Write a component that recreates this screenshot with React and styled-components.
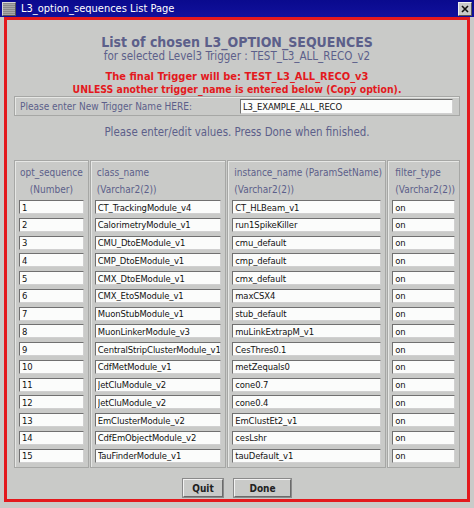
import React from 'react'
import styled, { createGlobalStyle } from 'styled-components'

const Global = createGlobalStyle`
  html, body { margin: 0; padding: 0; background: #c9cac8; }
  body { font-family: "DejaVu Sans Condensed", "DejaVu Sans", sans-serif; }
`

const Win = styled.div`
  width: 474px;
  height: 508px;
  display: flex;
  flex-direction: column;
  background: #c9cac8;
  overflow: hidden;
`
const TitleBar = styled.div`
  height: 17px;
  display: flex;
  align-items: center;
  background: linear-gradient(#0a0a8e, #10109c);
  padding: 0 2px;
  gap: 5px;
`
const MenuBox = styled.div`
  width: 12px;
  height: 12px;
  background: repeating-linear-gradient(#8a8a8a 0 1px, #a8a8a8 1px 2px);
  border: 1px solid #d8d8d8;
  border-right-color: #555;
  border-bottom-color: #555;
`
const TitleText = styled.span`
  flex: 1;
  color: #fff;
  font-family: "DejaVu Sans Condensed", "DejaVu Sans", sans-serif;
  font-size: 11px;
`
const CloseBox = styled.div`
  width: 12px;
  height: 12px;
  background: #c9cac8;
  border: 1px solid #f0f0f0;
  border-right-color: #555;
  border-bottom-color: #555;
  display: flex;
  align-items: center;
  justify-content: center;
`
const Frame = styled.div`
  margin: 0 4px 6px 4px;
  height: 485px;
  border: 3px solid #e3191d;
  box-sizing: border-box;
  display: flex;
  flex-direction: column;
  align-items: center;
  padding: 0 7px;
`
const Heading = styled.div`
  margin-top: 14px;
  font-size: 14px;
  line-height: 16px;
  font-weight: bold;
  color: #5c5f8a;
`
const SubHeading = styled.div`
  font-size: 11.5px;
  line-height: 13px;
  color: #5c5f8a;
`
const Warning = styled.div`
  margin-top: ${p => p.$top || 0}px;
  font-size: ${p => p.$size || 11}px;
  line-height: 13px;
  font-weight: bold;
  color: #e3191d;
`
const TriggerPanel = styled.div`
  align-self: stretch;
  height: 20px;
  box-sizing: border-box;
  border: 1px solid #a6a7a5;
  box-shadow: inset 1px 1px #e6e7e5;
  display: flex;
  align-items: center;
  padding: 0 6px 0 5px;
`
const PanelLabel = styled.span`
  flex: 1;
  font-size: 10px;
  color: #5c5f8a;
`
const Field = styled.input`
  box-sizing: border-box;
  width: ${p => p.$w || '100%'};
  height: ${p => p.$h || 14}px;
  margin: 0;
  padding: 0 0 0 2px;
  border: 1px solid #707070;
  border-right-color: #d0d0d0;
  border-bottom-color: #d0d0d0;
  background: #fbfcfb;
  font-family: "DejaVu Sans Condensed", "DejaVu Sans", sans-serif;
  font-size: 9.4px;
  letter-spacing: -0.1px;
  color: #111;
  outline: none;
`
const Instruction = styled.div`
  margin-top: 9px;
  font-size: 11.4px;
  line-height: 14px;
  color: #5c5f8a;
`
const Table = styled.div`
  margin-top: 21px;
  align-self: stretch;
  height: 308px;
  display: flex;
  gap: 1px;
`
const Column = styled.div`
  width: ${p => p.$w}px;
  box-sizing: border-box;
  border: 1px solid #a6a7a5;
  box-shadow: inset 1px 1px #e6e7e5;
  display: flex;
  flex-direction: column;
  padding: 0 4px;
`
const Head = styled.div`
  height: 17px;
  line-height: 17px;
  font-size: 10px;
  color: #5c5f8a;
  white-space: nowrap;
  text-align: ${p => p.$align || 'left'};
  padding-left: ${p => p.$pad || 0}px;
  margin-top: ${p => p.$top || 0}px;
`
const Cells = styled.div`
  margin-top: 2px;
  display: flex;
  flex-direction: column;
  gap: 3.76px;
`
const Buttons = styled.div`
  margin-top: 11px;
  display: flex;
  gap: 11px;
`
const Btn = styled.button`
  width: ${p => p.$w}px;
  height: 18px;
  padding: 0;
  background: #c9cac8;
  border: 1px solid #f2f2f2;
  border-right-color: #6a6a6a;
  border-bottom-color: #6a6a6a;
  box-shadow: 0 0 0 1px #8a8a8a;
  font-family: "DejaVu Sans Condensed", "DejaVu Sans", sans-serif;
  font-size: 10px;
  font-weight: bold;
  color: #222;
`

const rows = [
  ['1', 'CT_TrackingModule_v4', 'CT_HLBeam_v1'],
  ['2', 'CalorimetryModule_v1', 'run1SpikeKiller'],
  ['3', 'CMU_DtoEModule_v1', 'cmu_default'],
  ['4', 'CMP_DtoEModule_v1', 'cmp_default'],
  ['5', 'CMX_DtoEModule_v1', 'cmx_default'],
  ['6', 'CMX_EtoSModule_v1', 'maxCSX4'],
  ['7', 'MuonStubModule_v1', 'stub_default'],
  ['8', 'MuonLinkerModule_v3', 'muLinkExtrapM_v1'],
  ['9', 'CentralStripClusterModule_v1', 'CesThres0.1'],
  ['10', 'CdfMetModule_v1', 'metZequals0'],
  ['11', 'JetCluModule_v2', 'cone0.7'],
  ['12', 'JetCluModule_v2', 'cone0.4'],
  ['13', 'EmClusterModule_v2', 'EmClustEt2_v1'],
  ['14', 'CdfEmObjectModule_v2', 'cesLshr'],
  ['15', 'TauFinderModule_v1', 'tauDefault_v1'],
]

const columns = [
  { w: 75, title: 'opt_sequence', type: '(Number)', align: 'center', pad: 0, idx: 0 },
  { w: 137, title: 'class_name', type: '(Varchar2(2))', align: 'left', pad: 2, idx: 1 },
  { w: 159, title: 'instance_name (ParamSetName)', type: '(Varchar2(2))', align: 'left', pad: 2, idx: 2 },
  { w: 73, title: 'filter_type', type: '(Varchar2(2))', align: 'left', pad: 3, idx: 3 },
]

export default function App() {
  return (
    <Win>
      <Global />
      <TitleBar>
        <MenuBox />
        <TitleText>L3_option_sequences List Page</TitleText>
        <CloseBox>
          <svg width="8" height="8" viewBox="0 0 8 8">
            <path d="M1 1L7 7M7 1L1 7" stroke="#111" strokeWidth="1.6" />
          </svg>
        </CloseBox>
      </TitleBar>
      <Frame>
        <Heading>List of chosen L3_OPTION_SEQUENCES</Heading>
        <SubHeading>for selected Level3 Trigger : TEST_L3_ALL_RECO_v2</SubHeading>
        <Warning $top={7} $size={11}>The final Trigger will be: TEST_L3_ALL_RECO_v3</Warning>
        <Warning $size={10.4}>UNLESS another trigger_name is entered below (Copy option).</Warning>
        <TriggerPanel>
          <PanelLabel>Please enter New Trigger Name HERE:</PanelLabel>
          <Field $w="213px" $h={15} defaultValue="L3_EXAMPLE_ALL_RECO" />
        </TriggerPanel>
        <Instruction>Please enter/edit values. Press Done when finished.</Instruction>
        <Table>
          {columns.map(c => (
            <Column key={c.title} $w={c.w}>
              <Head $align={c.align} $pad={c.pad} $top={3}>{c.title}</Head>
              <Head $align={c.align} $pad={c.pad}>{c.type}</Head>
              <Cells>
                {rows.map(r => (
                  <Field key={r[0]} defaultValue={c.idx === 3 ? 'on' : r[c.idx]} />
                ))}
              </Cells>
            </Column>
          ))}
        </Table>
        <Buttons>
          <Btn $w={40}>Quit</Btn>
          <Btn $w={57}>Done</Btn>
        </Buttons>
      </Frame>
    </Win>
  )
}
